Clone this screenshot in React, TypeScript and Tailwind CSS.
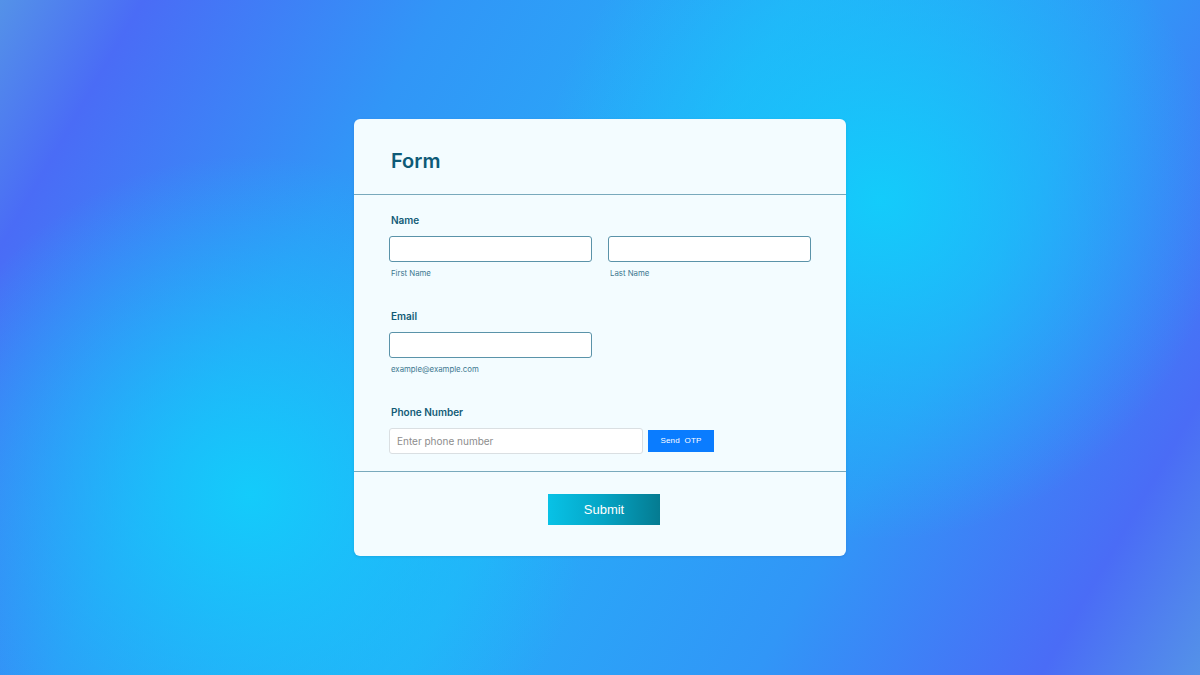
export default function App() {
  return (
    <div
      className="w-[1200px] h-[675px] flex items-center justify-center bg-[image:radial-gradient(circle_at_880px_200px,rgba(18,206,251,0.95)_0,rgba(18,206,251,0)_340px),radial-gradient(circle_at_250px_495px,rgba(18,206,251,0.95)_0,rgba(18,206,251,0)_340px),linear-gradient(120deg,#5492e8_0%,#4a6cf6_9%,#3196f7_28%,#27acf8_50%,#3196f7_72%,#4a6cf6_90%,#5492e8_100%)]"
      style={{ fontFamily: "Inter, 'Noto Sans', sans-serif" }}
    >
      <div className="w-[492px] h-[437px] flex flex-col rounded-[6px] bg-[#f3fcff] shadow-[0_1px_3px_rgba(0,60,120,0.15)]">
        <div className="h-[76px] shrink-0 flex items-center pl-[37px] pt-[8px] border-b border-[#78a9bc]">
          <h1 className="text-[20px] font-semibold text-[#0e5a77] leading-none">Form</h1>
        </div>

        <div className="flex-1 px-[35px] pt-[18px] flex flex-col border-b border-[#78a9bc]">
          <label className="pl-[2px] text-[10px] leading-[14px] font-semibold text-[#125b76]">Name</label>
          <div className="mt-[9px] flex gap-[16px]">
            <div className="w-[203px]">
              <input className="w-full h-[26px] rounded-[3px] border border-[#5a93a9] bg-white outline-none" />
              <p className="mt-[6px] pl-[2px] text-[7.8px] leading-[10px] text-[#3d7890]">First Name</p>
            </div>
            <div className="w-[203px]">
              <input className="w-full h-[26px] rounded-[3px] border border-[#5a93a9] bg-white outline-none" />
              <p className="mt-[6px] pl-[2px] text-[7.8px] leading-[10px] text-[#3d7890]">Last Name</p>
            </div>
          </div>

          <label className="mt-[31px] pl-[2px] text-[10px] leading-[14px] font-semibold text-[#125b76]">Email</label>
          <div className="mt-[9px] w-[203px]">
            <input className="w-full h-[26px] rounded-[3px] border border-[#5a93a9] bg-white outline-none" />
            <p className="mt-[6px] pl-[2px] text-[7.8px] leading-[10px] text-[#3d7890]">example@example.com</p>
          </div>

          <label className="mt-[31px] pl-[2px] text-[10px] leading-[14px] font-semibold text-[#125b76]">Phone Number</label>
          <div className="mt-[9px] flex items-center">
            <input
              placeholder="Enter phone number"
              className="w-[254px] h-[26px] rounded-[3px] border border-[#dadfe2] bg-white pl-[7px] text-[10px] text-[#333] placeholder:text-[#8d8d8d] outline-none"
            />
            <button
              className="ml-[5px] w-[66px] h-[22px] bg-[#0a7cff] text-white text-[8px] whitespace-pre tracking-[0.02em]"
              style={{ fontFamily: "'Liberation Sans', Arial, sans-serif" }}
            >
              Send  OTP
            </button>
          </div>
        </div>

        <div className="h-[84px] shrink-0 flex justify-center pt-[22px] pl-[8px]">
          <button
            className="w-[112px] h-[31px] bg-[linear-gradient(90deg,#08c2e6_0%,#05a4c4_50%,#057b91_100%)] text-white text-[13px] font-medium"
            style={{ fontFamily: "'Liberation Sans', Arial, sans-serif" }}
          >
            Submit
          </button>
        </div>
      </div>
    </div>
  );
}
